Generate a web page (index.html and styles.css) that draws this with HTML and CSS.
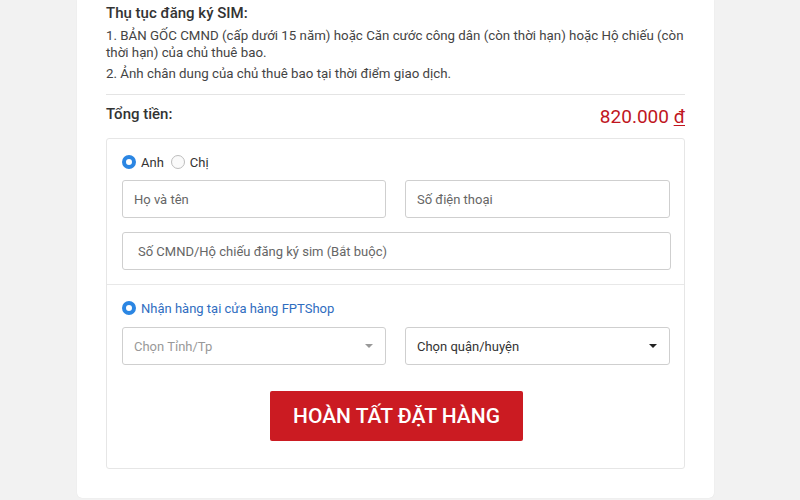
FILE: index.html
```html
<!DOCTYPE html>
<html lang="vi">
<head>
<meta charset="utf-8">
<title>Đặt hàng SIM</title>
<link rel="stylesheet" href="styles.css">
</head>
<body>
<div class="panel">
  <h3 class="title">Thụ tục đăng ký SIM:</h3>
  <div class="rules">
    <p>1. BẢN GỐC CMND (cấp dưới 15 năm) hoặc Căn cước công dân (còn thời hạn) hoặc Hộ chiếu (còn thời hạn) của chủ thuê bao.</p>
    <p>2. Ảnh chân dung của chủ thuê bao tại thời điểm giao dịch.</p>
  </div>
  <div class="total">
    <span class="total-label">Tổng tiền:</span>
    <span class="total-price">820.000 <u>đ</u></span>
  </div>
  <div class="form-box">
    <div class="section section-info">
      <div class="radio-row">
        <label class="radio"><span class="dot checked"></span>Anh</label>
        <label class="radio"><span class="dot"></span>Chị</label>
      </div>
      <div class="grid2">
        <input class="field" type="text" placeholder="Họ và tên">
        <input class="field" type="text" placeholder="Số điện thoại">
      </div>
      <input class="field field-wide" type="text" placeholder="Số CMND/Hộ chiếu đăng ký sim (Bắt buộc)">
    </div>
    <div class="section section-ship">
      <div class="radio-row">
        <label class="radio radio-blue"><span class="dot checked"></span>Nhận hàng tại cửa hàng FPTShop</label>
      </div>
      <div class="grid2">
        <div class="select select-empty"><span>Chọn Tỉnh/Tp</span><span class="caret"></span></div>
        <div class="select"><span>Chọn quận/huyện</span><span class="caret"></span></div>
      </div>
      <div class="actions">
        <button class="submit" type="button">HOÀN TẤT ĐẶT HÀNG</button>
      </div>
    </div>
  </div>
</div>
</body>
</html>
```

FILE: styles.css
```css
* { box-sizing: border-box; }
html, body { margin: 0; height: 500px; overflow: hidden; }
body {
  background: #f2f2f2;
  font-family: Roboto, "Liberation Sans", Arial, sans-serif;
  color: #333;
}
.panel {
  margin-left: 77px;
  width: 637px;
  background: #fff;
  padding: 3px 29px 29px;
  border-radius: 0 0 5px 5px;
  box-shadow: 0 0 1px rgba(0,0,0,0.12);
}
.title {
  margin: 0;
  font-size: 15px;
  line-height: 20px;
  font-weight: 500;
  color: #333;
}
.rules {
  padding-bottom: 12px;
  border-bottom: 1px solid #e4e4e4;
}
.rules p {
  margin: 4px 0 0;
  font-size: 13.3px;
  line-height: 17px;
  color: #444;
}
.total {
  display: flex;
  justify-content: space-between;
  align-items: flex-start;
  padding-top: 9px;
}
.total-label {
  font-size: 15px;
  line-height: 20px;
  font-weight: 500;
  color: #333;
}
.total-price {
  margin-top: 1px;
  font-size: 19px;
  line-height: 24px;
  color: #c0161e;
}
.total-price u { text-underline-offset: 2px; }
.form-box {
  margin-top: 9px;
  border: 1px solid #e6e6e6;
  border-radius: 3px;
}
.section { padding: 0 13px 0 15px; }
.section-info {
  padding-top: 13px;
  padding-bottom: 14px;
  border-bottom: 1px solid #e8e8e8;
}
.section-ship {
  padding-top: 13px;
  padding-bottom: 27px;
}
.radio-row {
  display: flex;
  align-items: center;
  gap: 7px;
  height: 20px;
}
.radio {
  display: flex;
  align-items: center;
  gap: 5px;
  font-size: 13px;
  color: #333;
}
.radio-blue { color: #2f6dbf; }
.dot {
  width: 14px;
  height: 14px;
  border-radius: 50%;
  border: 1px solid #bdbdbd;
  background: #fafafa;
}
.dot.checked {
  border: 4px solid #2b86e3;
  background: #fff;
}
.grid2 {
  display: grid;
  grid-template-columns: 264px 265px;
  column-gap: 19px;
}
.section-info .grid2 { margin-top: 8px; }
.section-ship .grid2 { margin-top: 9px; }
.field {
  display: block;
  height: 38px;
  width: 100%;
  border: 1px solid #cfcfcf;
  border-radius: 3px;
  padding: 0 11px;
  font-family: inherit;
  font-size: 13px;
  color: #333;
  background: #fff;
  outline: none;
}
.field::placeholder { color: #666; }
.field-wide {
  margin-top: 14px;
  padding: 0 15px;
}
.select {
  display: flex;
  align-items: center;
  justify-content: space-between;
  height: 38px;
  border: 1px solid #cfcfcf;
  border-radius: 3px;
  padding: 0 12px 0 11px;
  font-size: 13px;
  color: #333;
}
.select-empty { color: #999; }
.caret {
  width: 0;
  height: 0;
  border-left: 4px solid transparent;
  border-right: 4px solid transparent;
  border-top: 4px solid #222;
}
.select-empty .caret { border-top-color: #999; }
.actions {
  display: flex;
  justify-content: center;
  margin-top: 26px;
}
.submit {
  width: 253px;
  height: 50px;
  border: 0;
  border-radius: 2px;
  background: #cb1b22;
  color: #fff;
  font-family: inherit;
  font-size: 21px;
  font-weight: 500;
  letter-spacing: 0;
}
```
